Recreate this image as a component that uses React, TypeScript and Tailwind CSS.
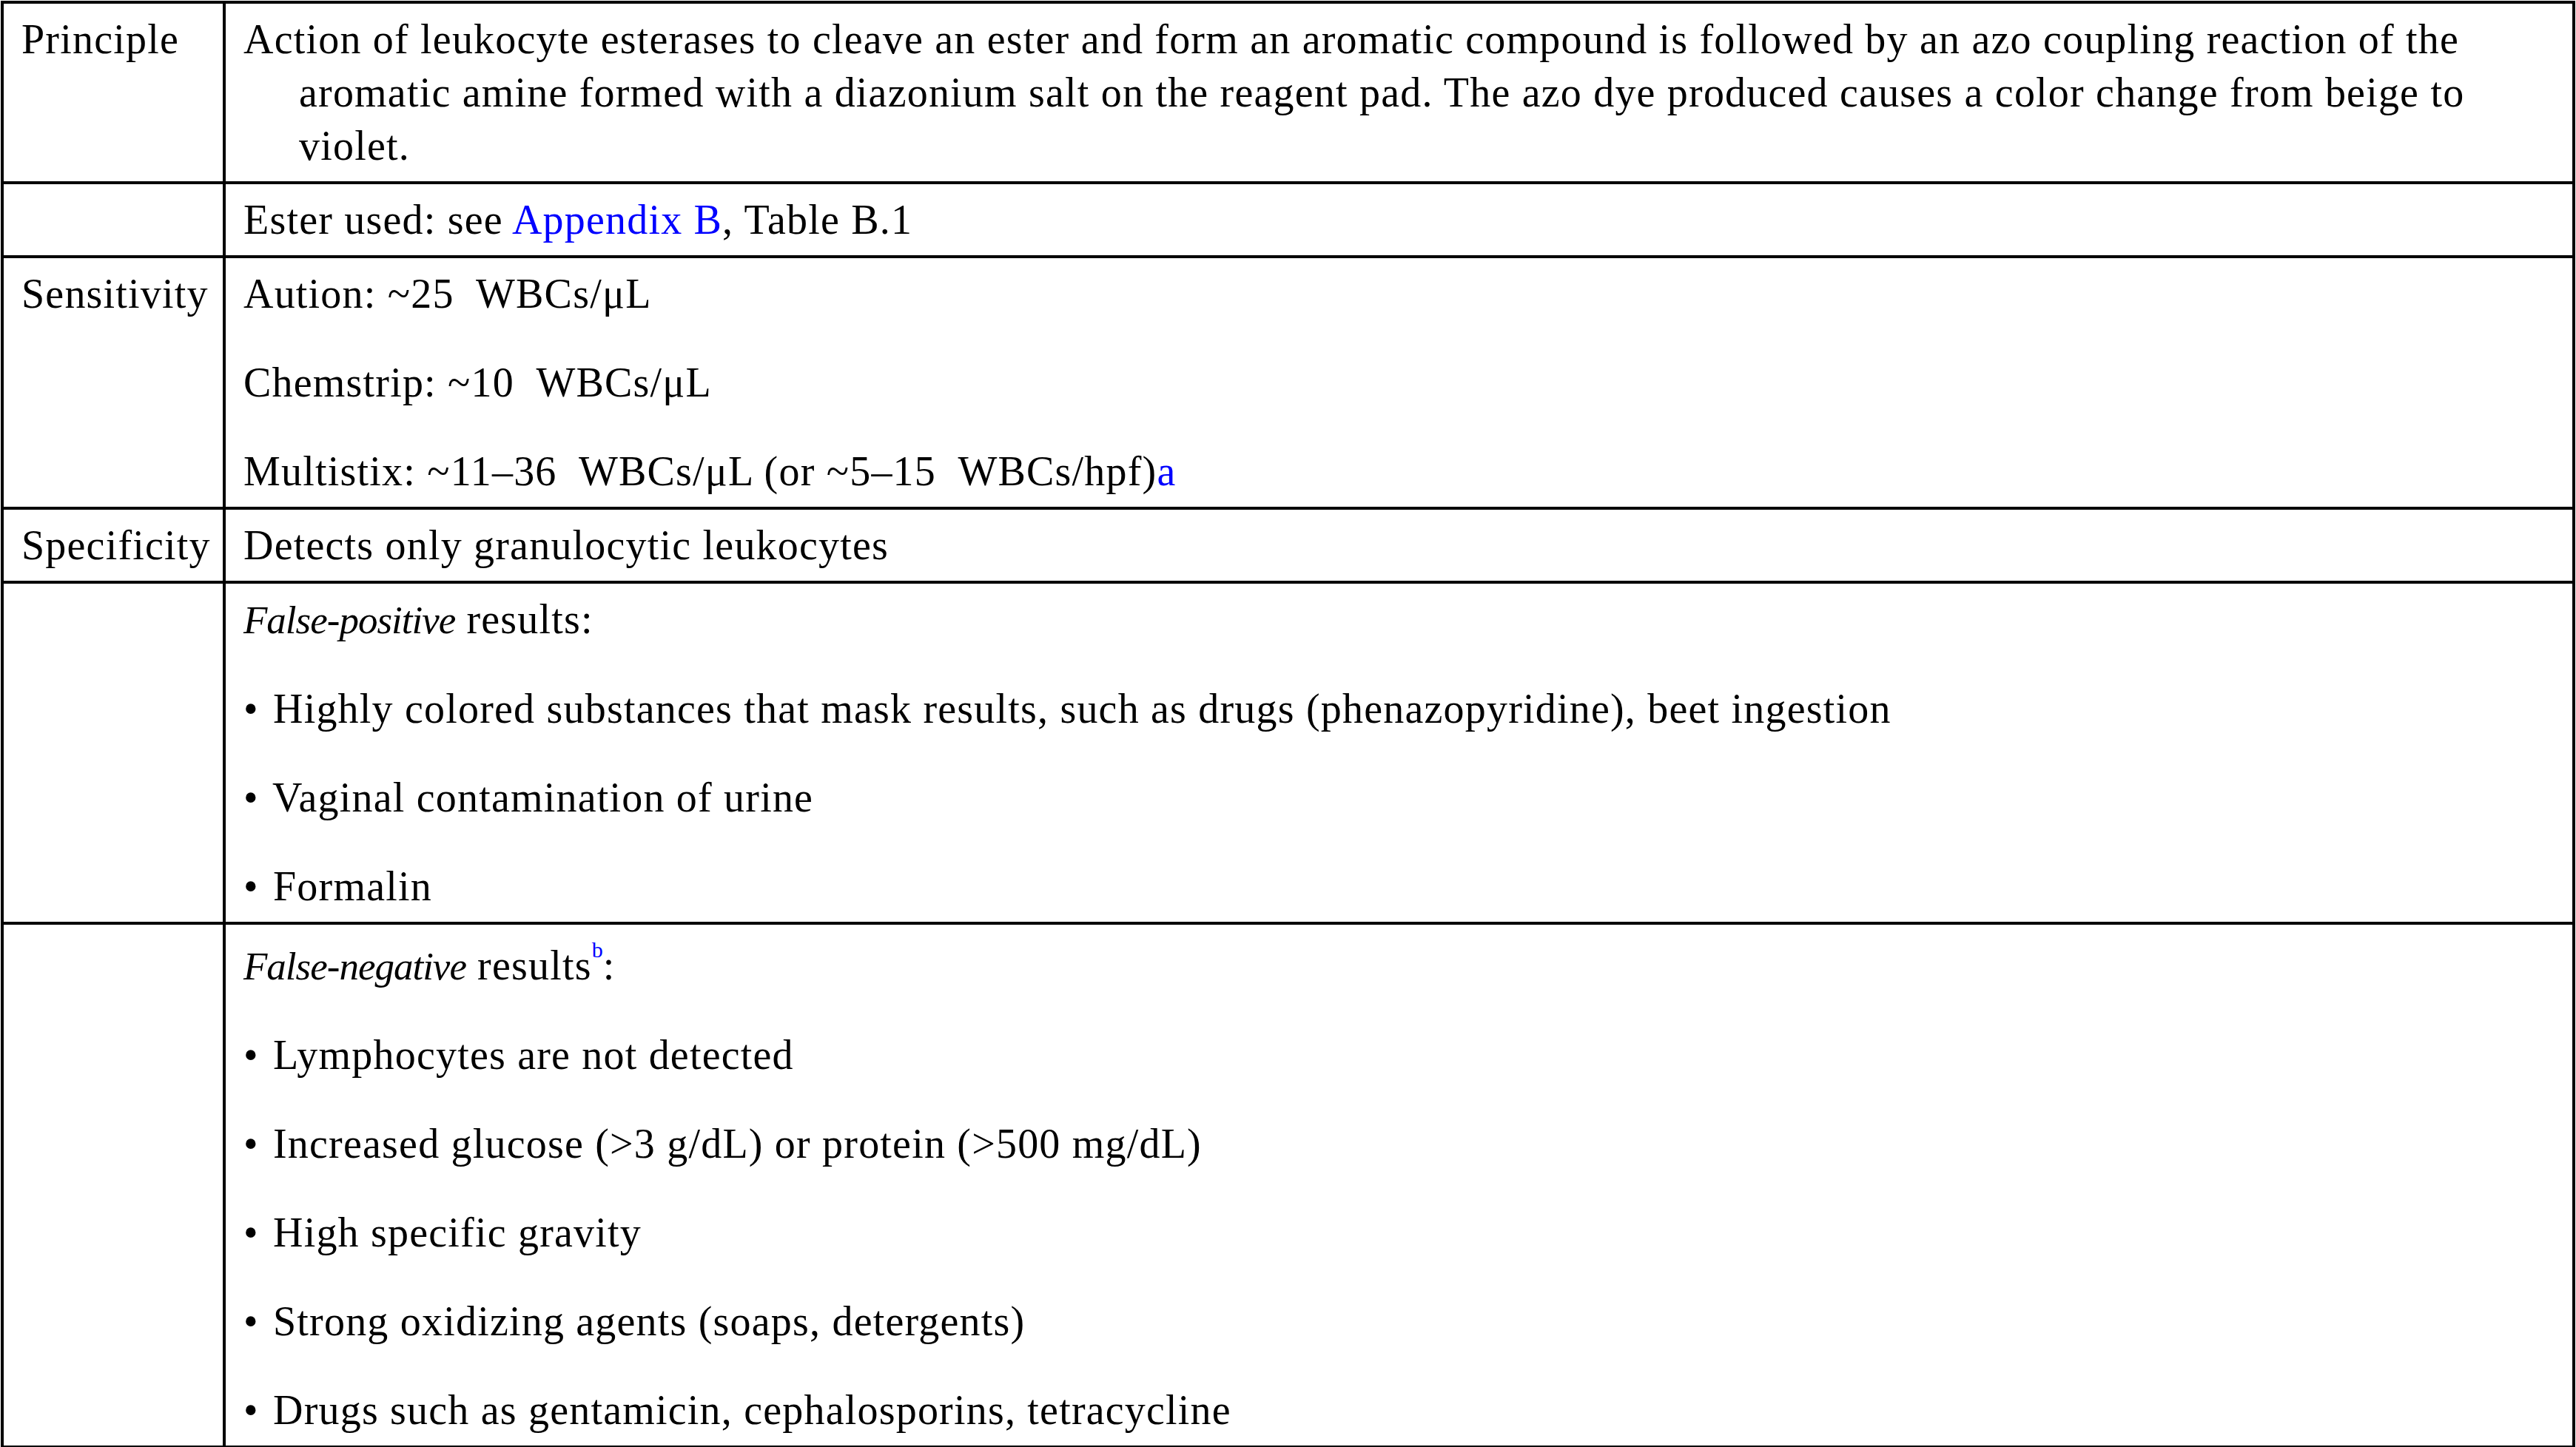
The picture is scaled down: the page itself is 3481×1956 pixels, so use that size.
import React from "react";

function Row({ label, children }: { label?: string; children: React.ReactNode }) {
  return (
    <>
      <div className="bg-white px-6 py-3">{label}</div>
      <div className="bg-white px-6 py-3 flex flex-col gap-12">{children}</div>
    </>
  );
}

function Bullet({ children }: { children: React.ReactNode }) {
  return (
    <p>
      <span className="mr-[4px]">•</span> {children}
    </p>
  );
}

export default function App() {
  return (
    <div className="min-h-screen bg-white">
      <div className="ml-[1px] mt-[1px] w-[3479px] bg-black p-[4px] grid grid-cols-[296px_1fr] gap-[4px] font-['Liberation_Serif',serif] text-[56px] leading-[72px] tracking-[1.2px] text-black">
        <Row label="Principle">
          <p className="pl-[75px] -indent-[75px]">
            Action of leukocyte esterases to cleave an ester and form an aromatic compound is followed by an azo coupling reaction of the
            <br />
            aromatic amine formed with a diazonium salt on the reagent pad. The azo dye produced causes a color change from beige to
            <br />
            violet.
          </p>
        </Row>
        <Row>
          <p>
            Ester used: see <span className="text-[#0000ff]">Appendix B</span>, Table B.1
          </p>
        </Row>
        <Row label="Sensitivity">
          <p>Aution: ~25{"\u00a0"} WBCs/μL</p>
          <p>Chemstrip: ~10{"\u00a0"} WBCs/μL</p>
          <p>
            Multistix: ~11–36{"\u00a0"} WBCs/μL (or ~5–15{"\u00a0"} WBCs/hpf)
            <span className="text-[#0000ff]">a</span>
          </p>
        </Row>
        <Row label="Specificity">
          <p>Detects only granulocytic leukocytes</p>
        </Row>
        <Row>
          <p>
            <i className="text-[53px] tracking-[-1px]">False-positive</i> results:
          </p>
          <Bullet>Highly colored substances that mask results, such as drugs (phenazopyridine), beet ingestion</Bullet>
          <Bullet>Vaginal contamination of urine</Bullet>
          <Bullet>Formalin</Bullet>
        </Row>
        <Row>
          <p className="pt-[7px]">
            <i className="text-[53px] tracking-[-1px]">False-negative</i> results
            <span className="relative -top-[30px] text-[30px] leading-none tracking-normal text-[#0000ff]">b</span>:
          </p>
          <Bullet>Lymphocytes are not detected</Bullet>
          <Bullet>Increased glucose (&gt;3 g/dL) or protein (&gt;500 mg/dL)</Bullet>
          <Bullet>High specific gravity</Bullet>
          <Bullet>Strong oxidizing agents (soaps, detergents)</Bullet>
          <Bullet>Drugs such as gentamicin, cephalosporins, tetracycline</Bullet>
        </Row>
      </div>
    </div>
  );
}
